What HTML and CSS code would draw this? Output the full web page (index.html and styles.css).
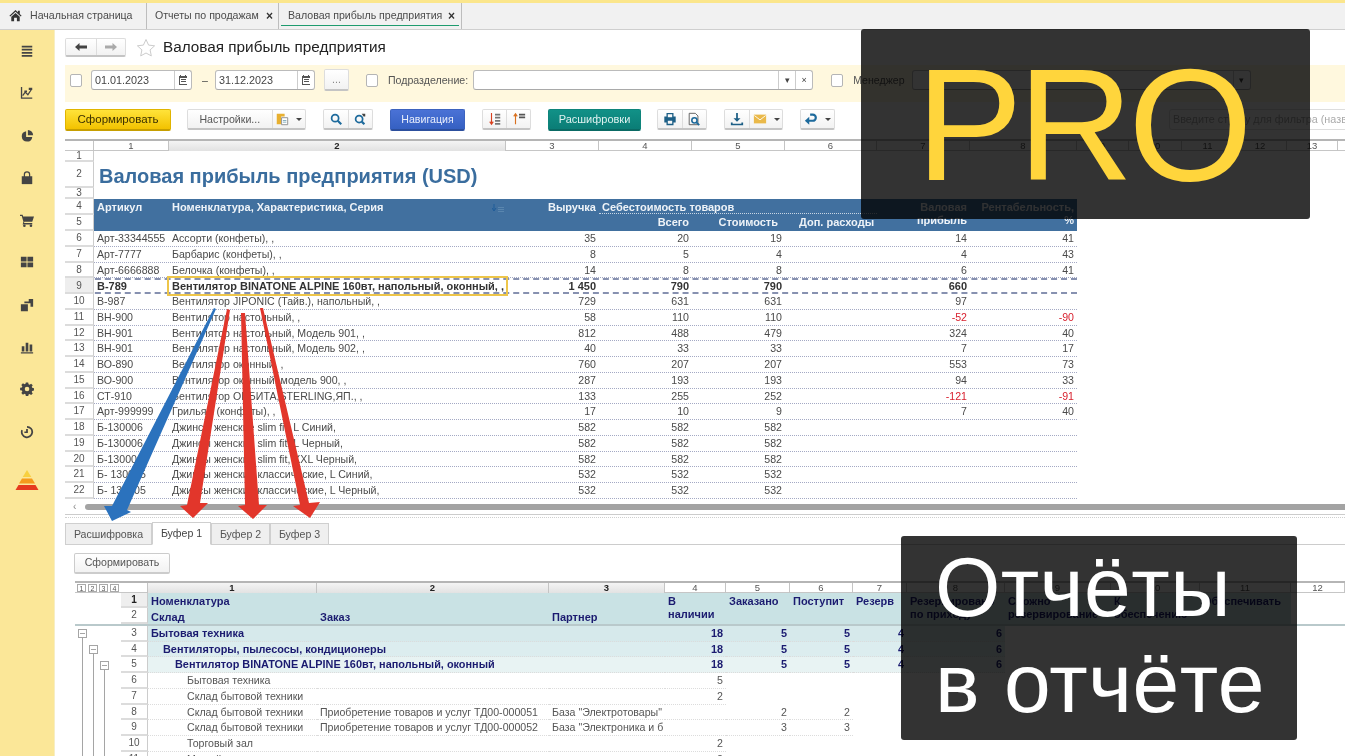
FILE: index.html
```html
<!DOCTYPE html>
<html lang="ru">
<head>
<meta charset="utf-8">
<title>Валовая прибыль предприятия</title>
<link rel="stylesheet" href="styles.css">
</head>
<body>
<div class="app">
  <div class="topline"></div>
  <nav class="tabs">
    <div class="tab tab-home"><svg class="ico-home" viewBox="0 0 16 16"><path d="M1.500 8.200 8 2l2.600 2.500V3h2v3.400l1.900 1.800-.9.9L8 4.100 2.400 9.100zM3.500 9.300 8 5.300l4.500 4V14H9.500v-3.500h-3V14H3.500z"/></svg><span>Начальная страница</span></div>
    <div class="tab tab-b"><span>Отчеты по продажам</span><b class="x">×</b></div>
    <div class="tab tab-c"><span>Валовая прибыль предприятия</span><b class="x">×</b></div>
  </nav>
  <div class="body">
    <aside class="side">
      <svg viewBox="0 0 16 16"><path d="M2 2h12v2H2zM2 5.500h12v2H2zM2 9h12v2H2zM2 12.500h12v2H2z"/></svg>
      <svg viewBox="0 0 16 16"><path d="M1 1h1.500v12H14v1.500H1z"/><path d="M3 11l3-4 3 3 4-6" fill="none" stroke="#444" stroke-width="1.500"/><path d="M5 5h3v2H5zM10 2h4v2.500h-4z"/></svg>
      <svg viewBox="0 0 16 16"><path d="M7 2.500A6 6 0 1 0 14 9H7z"/><path d="M9 1a6 6 0 0 1 6 6H9z"/></svg>
      <svg viewBox="0 0 16 16"><path d="M2 6h12v9H2z"/><path d="M5 7V4a3 3 0 0 1 6 0v3" fill="none" stroke="#444" stroke-width="1.400"/></svg>
      <svg viewBox="0 0 16 16"><path d="M0 2h3l.6 2H16l-2 6H5l-.4 1.500H14V13H3l.9-3L2 3.500H0z"/><circle cx="5" cy="14.500" r="1.500"/><circle cx="12.500" cy="14.500" r="1.500"/></svg>
      <svg viewBox="0 0 16 16"><path d="M1 2h6.500v5.500H1zM8.500 2H15v5.500H8.500zM1 8.500h6.500V14H1zM8.500 8.500H15V14H8.500z"/></svg>
      <svg viewBox="0 0 16 16"><path d="M1 7h8v8H1zM5 4h7v2H5zM10 1h5v9h-3V5h-2z"/></svg>
      <svg viewBox="0 0 16 16"><path d="M2 7h3v6H2zM6.500 3h3v10h-3zM11 5h3v8h-3zM1 14h14v1.500H1z"/></svg>
      <svg viewBox="0 0 16 16"><path fill-rule="evenodd" d="M6.500 0h3l.5 2.300 1.300.6 2-1.300 2.100 2.100-1.300 2 .6 1.300 2.300.5v3l-2.300.5-.6 1.300 1.300 2-2.100 2.100-2-1.300-1.300.6-.5 2.300h-3L6 15.200l-1.300-.6-2 1.300L.6 13.800l1.300-2-.6-1.300L-1 10V7l2.300-.5.6-1.300-1.300-2L2.700 1.100l2 1.300L6 1.800zM8 5.500a3 3 0 1 0 0 6 3 3 0 0 0 0-6z" transform="translate(1 .5) scale(.88)"/></svg>
      <svg viewBox="0 0 16 16"><path d="M8 1a7 7 0 1 1-6.500 4.400l1.800.8A5 5 0 1 0 8 3z"/><path d="M7 4.500h2V9H5V7.500h2z"/></svg>
      <svg class="pyramid" viewBox="0 0 24 20"><path fill="#f8d040" d="M12 0l4.300 7H7.700z"/><path fill="#f59a1c" d="M7 8.500h10l3 5H4z"/><path fill="#e63a1e" d="M3.500 15h17l3 5H.5z"/></svg>
    </aside>
    <main class="main">
      <header class="titlebar">
        <div class="btn nav"><span class="seg"><svg class="navi" viewBox="0 0 12 8"><path fill="#444" d="M0 4l4.500-4v2.500H12v3H4.500V8z"/></svg></span><span class="seg"><svg class="navi" viewBox="0 0 12 8"><path fill="#aaa" d="M12 4L7.500 0v2.500H0v3h7.500V8z"/></svg></span></div>
        <svg class="star" viewBox="0 0 20 20"><path d="M10 1.500l2.600 5.600 6 .7-4.500 4.100 1.200 6L10 15l-5.300 2.900 1.200-6L1.400 7.800l6-.7z"/></svg>
        <h1>Валовая прибыль предприятия</h1>
      </header>
      <section class="filter">
        <span class="check"></span>
        <div class="input date"><span class="val">01.01.2023</span><span class="pick"><svg class="cal" viewBox="0 0 10 10"><path d="M1 1h1V0h1v1h4V0h1v1h1v9H1zM2 3v6h7V3z"/><path d="M3 4h5v1H3zM3 6h5v1H3z"/></svg></span></div>
        <span class="dash">–</span>
        <div class="input date d2"><span class="val">31.12.2023</span><span class="pick"><svg class="cal" viewBox="0 0 10 10"><path d="M1 1h1V0h1v1h4V0h1v1h1v9H1zM2 3v6h7V3z"/><path d="M3 4h5v1H3zM3 6h5v1H3z"/></svg></span></div>
        <div class="btn dots">...</div>
        <span class="check c2"></span>
        <label class="lbl">Подразделение:</label>
        <div class="input wide"><span class="val"></span><span class="pick drop">▾</span><span class="pick drop">×</span></div>
        <span class="check c3"></span>
        <label class="lbl">Менеджер</label>
        <div class="input wide2"><span class="val"></span><span class="pick drop">▾</span></div>
      </section>
      <section class="toolbar">
        <div class="btn primary">Сформировать</div>
        <div class="btn group g1"><span class="seg txt">Настройки...</span><span class="seg ic2"><svg class="tool" viewBox="0 0 16 16"><path fill="#e8b030" d="M2 2h9v3H7v9H2z"/><path fill="#fff" stroke="#888" d="M7.500 6.500h7v8h-7z"/><path fill="#69a" d="M9 9h4v1H9zM9 11h4v1H9z"/></svg><i class="caret"></i></span></div>
        <div class="btn group g2"><span class="seg sq"><svg class="tool" viewBox="0 0 16 16"><circle cx="7" cy="7" r="4" fill="none" stroke="#1d6a9c" stroke-width="2"/><path d="M10 10l4 4" stroke="#1d6a9c" stroke-width="2.500"/></svg></span><span class="seg sq"><svg class="tool" viewBox="0 0 16 16"><circle cx="7" cy="8" r="4" fill="none" stroke="#1d6a9c" stroke-width="2"/><path d="M10 11l3 3" stroke="#1d6a9c" stroke-width="2.500"/><path d="M10 2h4v3h-2z" fill="#444"/></svg></span></div>
        <div class="btn blue">Навигация</div>
        <div class="btn group g3"><span class="seg sq"><svg class="tool" viewBox="0 0 16 16"><path d="M4 1v13M2 11l2 3 2-3" fill="none" stroke="#d9401e" stroke-width="1.300"/><path fill="#777" d="M8 2h6v2H8zM8 5.500h6v2H8zM8 9h6v2H8zM8 12.500h6v2H8z"/></svg></span><span class="seg sq"><svg class="tool" viewBox="0 0 16 16"><path d="M4 14V2M2 5l2-3 2 3" fill="none" stroke="#d9701e" stroke-width="1.300"/><path fill="#555" d="M8 2h7v2H8zM8 5h7v2H8z"/></svg></span></div>
        <div class="btn teal">Расшифровки</div>
        <div class="btn group g4"><span class="seg sq"><svg class="tool" viewBox="0 0 16 16"><path fill="#1d5f86" d="M4 1h8v4h2.500v7H12v3H4v-3H1.500V5H4zM5.500 2.500V6h5V2.500zM5.500 10v3.500h5V10z"/></svg></span><span class="seg sq"><svg class="tool" viewBox="0 0 16 16"><path fill="none" stroke="#555" d="M2.500 1.500h7l3 3v10h-10z"/><circle cx="8.500" cy="9.500" r="3" fill="none" stroke="#1d6a9c" stroke-width="1.800"/><path d="M10.500 11.500l3.500 3.500" stroke="#1d6a9c" stroke-width="2"/></svg></span></div>
        <div class="btn group g5"><span class="seg sq"><svg class="tool" viewBox="0 0 16 16"><path fill="#1d5f86" d="M7 1h2v6h3L8 11 4 7h3zM1 12h2v1.500h10V12h2v3H1z"/></svg></span><span class="seg ic2"><svg class="tool" viewBox="0 0 16 16"><path fill="#eab94a" d="M1 3h14v10H1z"/><path fill="none" stroke="#fff" d="M1.500 4 8 9l6.500-5"/></svg><i class="caret"></i></span></div>
        <div class="btn group g6"><span class="seg ic2"><svg class="tool" viewBox="0 0 16 16"><path fill="none" stroke="#1d6a9c" stroke-width="2.500" d="M7 3h3a3.500 3.500 0 0 1 0 7H4"/><path fill="#1d6a9c" d="M6 5.500 1 10l5 4.500z"/></svg><i class="caret"></i></span></div>
        <div class="input search"><span class="val ph">Введите строку для фильтра (назва</span></div>
      </section>

      <section class="sheet s1">
        <div class="colhead"><span></span><span>1</span><span class="sel">2</span><span>3</span><span>4</span><span>5</span><span>6</span><span>7</span><span>8</span><span>9</span><span>10</span><span>11</span><span>12</span><span>13</span></div>
        <div class="blank h11"><span class="num">1</span></div>
        <div class="blank h26"><span class="num">2</span><h2>Валовая прибыль предприятия (USD)</h2></div>
        <div class="blank h11"><span class="num">3</span></div>
        <div class="thead">
          <span class="num">4</span><span>Артикул</span><span class="sorted">Номенклатура, Характеристика, Серия<svg class="sort" viewBox="0 0 12 8"><path d="M2 0v6M0 4l2 3 2-3" fill="none" stroke="#1f5c99"/><path fill="#5a86ae" d="M6 3h6v1H6zM6 5h6v1H6zM6 7h6v1H6z"/></svg></span><span class="r">Выручка</span><span class="cost">Себестоимость товаров</span><span class="r two">Валовая<br>прибыль</span><span class="r two">Рентабельность,<br>%</span>
          <span class="num">5</span><span></span><span></span><span></span><span class="r low">Всего</span><span class="r low l-cost">Стоимость</span><span class="low l-extra">Доп. расходы</span>
        </div>
        <div class="row"><span class="num">6</span><span>Арт-33344555</span><span>Ассорти (конфеты), ,</span><span class="r">35</span><span class="r">20</span><span class="r">19</span><span></span><span class="r">14</span><span class="r">41</span></div>
        <div class="row"><span class="num">7</span><span>Арт-7777</span><span>Барбарис (конфеты), ,</span><span class="r">8</span><span class="r">5</span><span class="r">4</span><span></span><span class="r">4</span><span class="r">43</span></div>
        <div class="row"><span class="num">8</span><span>Арт-6666888</span><span>Белочка (конфеты), ,</span><span class="r">14</span><span class="r">8</span><span class="r">8</span><span></span><span class="r">6</span><span class="r">41</span></div>
        <div class="row current"><span class="num">9</span><span>В-789</span><span class="focus">Вентилятор BINATONE ALPINE 160вт, напольный, оконный, ,</span><span class="r">1 450</span><span class="r">790</span><span class="r">790</span><span></span><span class="r">660</span><span></span></div>
        <div class="row"><span class="num">10</span><span>В-987</span><span>Вентилятор JIPONIC (Тайв.), напольный, ,</span><span class="r">729</span><span class="r">631</span><span class="r">631</span><span></span><span class="r">97</span><span></span></div>
        <div class="row"><span class="num">11</span><span>ВН-900</span><span>Вентилятор настольный, ,</span><span class="r">58</span><span class="r">110</span><span class="r">110</span><span></span><span class="r neg">-52</span><span class="r neg">-90</span></div>
        <div class="row"><span class="num">12</span><span>ВН-901</span><span>Вентилятор настольный, Модель 901, ,</span><span class="r">812</span><span class="r">488</span><span class="r">479</span><span></span><span class="r">324</span><span class="r">40</span></div>
        <div class="row"><span class="num">13</span><span>ВН-901</span><span>Вентилятор настольный, Модель 902, ,</span><span class="r">40</span><span class="r">33</span><span class="r">33</span><span></span><span class="r">7</span><span class="r">17</span></div>
        <div class="row"><span class="num">14</span><span>ВО-890</span><span>Вентилятор оконный, ,</span><span class="r">760</span><span class="r">207</span><span class="r">207</span><span></span><span class="r">553</span><span class="r">73</span></div>
        <div class="row"><span class="num">15</span><span>ВО-900</span><span>Вентилятор оконный, модель 900, ,</span><span class="r">287</span><span class="r">193</span><span class="r">193</span><span></span><span class="r">94</span><span class="r">33</span></div>
        <div class="row"><span class="num">16</span><span>СТ-910</span><span>Вентилятор ORБИТА,STERLING,ЯП., ,</span><span class="r">133</span><span class="r">255</span><span class="r">252</span><span></span><span class="r neg">-121</span><span class="r neg">-91</span></div>
        <div class="row"><span class="num">17</span><span>Арт-999999</span><span>Грильяж (конфеты), ,</span><span class="r">17</span><span class="r">10</span><span class="r">9</span><span></span><span class="r">7</span><span class="r">40</span></div>
        <div class="row"><span class="num">18</span><span>Б-130006</span><span>Джинсы женские slim fit, L Синий,</span><span class="r">582</span><span class="r">582</span><span class="r">582</span></div>
        <div class="row"><span class="num">19</span><span>Б-130006</span><span>Джинсы женские slim fit, L Черный,</span><span class="r">582</span><span class="r">582</span><span class="r">582</span></div>
        <div class="row"><span class="num">20</span><span>Б-130006</span><span>Джинсы женские slim fit, XXL Черный,</span><span class="r">582</span><span class="r">582</span><span class="r">582</span></div>
        <div class="row"><span class="num">21</span><span>Б- 130005</span><span>Джинсы женские классические, L Синий,</span><span class="r">532</span><span class="r">532</span><span class="r">532</span></div>
        <div class="row"><span class="num">22</span><span>Б- 130005</span><span>Джинсы женские классические, L Черный,</span><span class="r">532</span><span class="r">532</span><span class="r">532</span></div>
        <div class="hscroll"><span class="arrow">‹</span><span class="thumb"></span></div>
      </section>
      <div class="splitter"></div>

      <div class="pages">
        <span class="page">Расшифровка</span><span class="page active">Буфер 1</span><span class="page">Буфер 2</span><span class="page">Буфер 3</span>
      </div>
      <div class="btn form2">Сформировать</div>

      <section class="sheet s2">
        <svg class="outline" viewBox="0 0 46 162"><g fill="none" stroke="#a5a5a5"><path d="M7.500 43V162M18.500 59V162M29.500 75V162"/><g fill="#fff"><rect x="3.500" y="35.500" width="8" height="8"/><rect x="14.500" y="51.500" width="8" height="8"/><rect x="25.500" y="67.500" width="8" height="8"/></g><path d="M5 39.500h5M16 55.500h5M27 71.500h5"/></g></svg>
        <div class="colhead c2h"><span class="levels"><i>1</i><i>2</i><i>3</i><i>4</i></span><span></span><span class="sel">1</span><span class="sel">2</span><span class="sel">3</span><span>4</span><span>5</span><span>6</span><span>7</span><span>8</span><span>9</span><span>10</span><span>11</span><span>12</span></div>
        <div class="thead2">
          <span class="gut"></span><span class="num nsel">1</span><span class="w3">Номенклатура</span><span class="two">В<br>наличии</span><span class="two">Заказано</span><span class="two">Поступит</span><span class="two">Резерв</span><span class="two">Резервировано<br>по приходу</span><span class="two">Сложно<br>резервирование</span><span class="two">К<br>обеспечению</span><span class="two">Обеспечивать</span><span class="gut two"></span>
          <span class="gut"></span><span class="num">2</span><span>Склад</span><span>Заказ</span><span>Партнер</span>
        </div>
        <div class="row2 g-a"><span class="gut"></span><span class="num">3</span><span class="w3">Бытовая техника</span><span class="r">18</span><span class="r">5</span><span class="r">5</span><span class="r">4</span><span class="r">6</span></div>
        <div class="row2 g-b"><span class="gut"></span><span class="num">4</span><span class="w3 i1">Вентиляторы, пылесосы, кондиционеры</span><span class="r">18</span><span class="r">5</span><span class="r">5</span><span class="r">4</span><span class="r">6</span></div>
        <div class="row2 g-c"><span class="gut"></span><span class="num">5</span><span class="w3 i2">Вентилятор BINATONE ALPINE 160вт, напольный, оконный</span><span class="r">18</span><span class="r">5</span><span class="r">5</span><span class="r">4</span><span class="r">6</span></div>
        <div class="row2"><span class="gut"></span><span class="num">6</span><span class="i3">Бытовая техника</span><span></span><span></span><span class="r">5</span></div>
        <div class="row2"><span class="gut"></span><span class="num">7</span><span class="i3">Склад бытовой техники</span><span></span><span></span><span class="r">2</span></div>
        <div class="row2"><span class="gut"></span><span class="num">8</span><span class="i3">Склад бытовой техники</span><span>Приобретение товаров и услуг ТД00-000051</span><span>База "Электротовары"</span><span></span><span class="r">2</span><span class="r">2</span></div>
        <div class="row2"><span class="gut"></span><span class="num">9</span><span class="i3">Склад бытовой техники</span><span>Приобретение товаров и услуг ТД00-000052</span><span>База "Электроника и б</span><span></span><span class="r">3</span><span class="r">3</span></div>
        <div class="row2"><span class="gut"></span><span class="num">10</span><span class="i3">Торговый зал</span><span></span><span></span><span class="r">2</span></div>
        <div class="row2"><span class="gut"></span><span class="num">11</span><span class="i3">Малый склад</span><span></span><span></span><span class="r">2</span></div>
      </section>
    </main>
  </div>

  <svg class="arrows" viewBox="0 0 1345 756">
    <polygon class="blue-a" points="214,308 216,309 127,510 131,512 112,521 104,506 112,506"/>
    <polygon class="red-a" points="227,309 230,310 200,503 208,503 193,518 180,506 187,505"/>
    <polygon class="red-a" points="241,313 245,313 259,505 267,505 253,519 238,506 245,505"/>
    <polygon class="red-a" points="260,308 263,308 309,503 320,502 310,518 293,506 300,505"/>
  </svg>
  <div class="panel pro"><span>PRO</span></div>
  <div class="panel rep"><span>Отчёты<br>в отчёте</span></div>
</div>
</body>
</html>
```
FILE: styles.css
```css
* { box-sizing: border-box; }
html, body { margin: 0; height: 100%; background: #fff; }
body { font: 10.600px/1.2 "Liberation Sans", Arial, sans-serif; color: #484848; overflow: hidden; }
.app { position: relative; width: 1345px; height: 756px; display: flex; flex-direction: column; overflow: hidden; }
.topline { height: 3px; background: #fbe68c; flex: none; }

.tabs { flex: none; height: 27px; display: flex; align-items: stretch; background: #f1f1f1; border-bottom: 1px solid #cfcfcf; color: #4b4b4b; }
.tab { display: flex; align-items: center; border-right: 1px solid #bdbdbd; padding-bottom: 1px; }
.tab-home { width: 147px; padding-left: 8px; gap: 7px; }
.ico-home { width: 15px; height: 15px; fill: #333; }
.tab-b { width: 132px; padding-left: 8px; justify-content: space-between; padding-right: 5px; }
.tab-c { width: 183px; padding-left: 9px; padding-right: 6px; justify-content: space-between; background: linear-gradient(#1e9b6e, #1e9b6e) no-repeat 2px 22px / 178px 1px; }
.x { font-size: 12px; line-height: 10px; color: #333; }

.body { flex: 1; display: flex; min-height: 0; }
.side { flex: none; width: 55px; background: #fbe798; border-right: 1px solid #f7eec4; display: flex; flex-direction: column; align-items: center; padding-top: 14px; gap: 28.300px; }
.side svg { width: 14px; height: 14px; fill: #444; flex: none; }
.side .pyramid { width: 24px; height: 20px; margin-top: 3px; }

.main { flex: 1; min-width: 0; padding-left: 10px; overflow: hidden; }
.titlebar { height: 35px; display: flex; align-items: center; }
.titlebar h1 { margin: 0 0 0 7px; font-size: 15.300px; font-weight: 400; color: #222; }
.star { width: 20px; height: 20px; margin-left: 10px; fill: #fff; stroke: #ccc; }

.btn { display: flex; align-items: center; justify-content: center; height: 21px; border: 1px solid #ddd; border-bottom: 2px solid #c4c4c4; border-radius: 2px; background: linear-gradient(#fff, #f2f2f2); flex: none; }
.nav { width: 61px; height: 19px; margin-top: -1px; }
.seg { height: 100%; display: flex; align-items: center; justify-content: center; }
.nav .seg { width: 50%; }
.nav .seg + .seg { border-left: 1px solid #ddd; }
.navi { width: 12px; height: 8px; }

.filter { height: 37px; background: #fff8de; display: flex; align-items: center; padding: 0 0 7px 5px; }
.check { width: 12px; height: 13px; border: 1px solid #b5b5b5; border-radius: 2px; background: #fff; flex: none; }
.input { display: flex; height: 20px; background: #fff; border: 1px solid #bbb; border-bottom-color: #a9a9a9; border-radius: 3px; flex: none; }
.val { flex: 1; padding: 3px 3px; color: #444; white-space: nowrap; overflow: hidden; font-size: 10.800px; }
.pick { width: 17px; border-left: 1px solid #ccc; display: flex; align-items: center; justify-content: center; font-size: 9px; color: #444; }
.date { width: 101px; margin-left: 9px; }
.d2 { width: 100px; }
.cal { width: 10px; height: 10px; fill: #555; }
.dash { width: 23px; padding-left: 10px; margin-right: -9px; }
.dots { width: 25px; height: 22px; margin-left: 9px; color: #888; }
.c2 { margin-left: 17px; }
.lbl { margin-left: 10px; color: #555; white-space: nowrap; }
.wide { width: 340px; margin-left: 5px; }
.c3 { margin-left: 18px; }
.wide2 { width: 339px; margin-left: 7px; }

.toolbar { display: flex; margin-top: 7px; height: 22px; align-items: flex-start; }
.primary { width: 106px; height: 22px; font-size: 11.500px; background: linear-gradient(#ffe33a, #f3c200); border-color: #e0b400; border-bottom-color: #c79f00; color: #3a2f00; }
.group .seg + .seg { border-left: 1px solid #ddd; }
.sq { width: 25px; }
.tool { width: 14px; height: 14px; }
.caret { width: 0; height: 0; border: 3px solid transparent; border-top: 3px solid #444; border-bottom: 0; margin-left: 7px; }
.g1 { width: 119px; margin-left: 16px; }
.g1 .txt { width: 85px; color: #555; }
.g1 .ic2 { width: 34px; }
.g2 { width: 50px; margin-left: 17px; }
.blue { width: 75px; height: 22px; margin-left: 17px; color: #e8eefc; background: linear-gradient(#4a72d6, #3560c2); border-color: #3c63bf; border-bottom-color: #2c4f9d; }
.g3 { width: 49px; margin-left: 17px; }
.teal { width: 93px; height: 22px; margin-left: 17px; font-size: 11px; color: #dff2f0; background: linear-gradient(#119187, #0b7d76); border-color: #0e847b; border-bottom-color: #0a6a64; }
.g4 { width: 50px; margin-left: 16px; }
.g5 { width: 59px; margin-left: 17px; }
.g5 .ic2 { width: 34px; }
.g6 { width: 35px; margin-left: 17px; }
.search { width: 200px; height: 21px; margin-left: 334px; border-color: #ddd; }
.ph { color: #aaa; }

.sheet { position: relative; }
.s1 { margin-top: 8px; --cols: 29px 75px 337px 93px 93px 93px 92px 93px 107px; }
.colhead { display: grid; height: 12px; border-top: 2px solid #b5b5b5; border-bottom: 1px solid #c6c6c6; text-align: center; font-size: 9.500px; line-height: 10px; color: #555; grid-template-columns: 29px 75px 337px 93px 93px 93px 92px 93px 107px 52px 53px 52px 53px 51px; }
.colhead span { border-right: 1px solid #c4c4c4; }
.colhead .sel { background: linear-gradient(#f4f4f4, #e2e2e2); color: #222; font-weight: 700; }
.num { display: block; background: #fff; text-align: center; border-right: 1px solid #ccc; border-bottom: 2px solid #dcdcdc; color: #555; font-size: 10px; }
.blank { display: flex; width: 29px; }
.blank .num { width: 29px; flex: none; line-height: 10px; }
.h11 { height: 11px; }
.h26 { height: 26px; }
.h26 .num { line-height: 24px; }
.h26 h2 { margin: 0; padding: 1px 0 0 5px; flex: none; font-size: 20px; line-height: 26px; color: #3a6d9e; font-weight: 700; white-space: nowrap; }
.thead { display: grid; grid-template-columns: var(--cols); grid-template-rows: 16px 16px; width: 1012px; background: #41709f; color: #eef3f8; font-weight: 700; font-size: 11px; line-height: 13px; }
.thead > span { padding: 2px 3px 0; white-space: nowrap; }
.thead .num { font-weight: 400; font-size: 10px; line-height: 14px; padding: 0; color: #555; }
.sorted { position: relative; }
.sort { position: absolute; right: 2px; top: 5px; width: 12px; height: 8px; }
.cost { grid-column: span 3; border-bottom: 1px dotted #c8d6e4; height: 15px; }
.two { grid-row: span 2; line-height: 13px; }
.low { padding-top: 1px !important; }
.l-cost { padding-right: 7px !important; }
.l-extra { padding-left: 14px !important; }
.r { text-align: right; }

.row { display: grid; grid-template-columns: var(--cols); width: 1012px; height: 15.750px; border-bottom: 1px dotted #a4a9c4; line-height: 14px; color: #4a4a4a; }
.row > span { padding: 0 3px; white-space: nowrap; overflow: hidden; }
.row > .num { padding: 0; margin-bottom: -1px; font-size: 10px; }
.neg { color: #d81e2c; }
.current { border-top: 2px dashed #8791b0; border-bottom: 2px dashed #8791b0; font-weight: 700; font-size: 11px; line-height: 12px; color: #333; }
.row.current > .num { margin-top: -2px; margin-bottom: -2px; background: #eee; font-weight: 400; line-height: 15px; }
.row > .focus { margin: 0 2px; padding: 0 1px; outline: 2px solid #eec64a; outline-offset: 2px; overflow: visible; }
.hscroll { display: flex; align-items: center; height: 14px; border-bottom: 1px solid #ccc; margin-top: 2px; color: #888; padding-left: 8px; }
.arrow { width: 12px; font-size: 10px; }
.thumb { flex: 1; height: 6px; border-radius: 3px 0 0 3px; background: #a3a3a3; }
.splitter { height: 3px; border-bottom: 1px dotted #cfcfcf; }

.pages { display: flex; height: 23px; margin-top: 4px; border-bottom: 1px solid #ccc; align-items: flex-end; }
.page { width: 59px; height: 22px; margin-bottom: -1px; background: #efefef; border: 1px solid #cfcfcf; text-align: center; line-height: 21px; color: #555; }
.page:first-child { width: 87px; }
.page.active { background: #fff; border-bottom-color: #fff; height: 23px; color: #444; }
.form2 { width: 96px; margin: 8px 0 0 9px; height: 21px; color: #555; border-color: #ccc; }

.s2 { margin: 7px 0 0 10px; --c2: 46px 27px 169px 232px 116px 61px 64px 63px 54px 98px 106px 89px 91px 54px; }
.outline { position: absolute; left: 0; top: 13px; width: 46px; height: 162px; z-index: 1; }
.c2h { grid-template-columns: var(--c2); }
.c2h > span { border-right: 1px solid #c4c4c4; }
.levels { display: flex; gap: 2px; padding: 1px 0 0 2px; border: 0 !important; }
.levels i { width: 9px; height: 8px; border: 1px solid #aaa; font-style: normal; font-size: 7px; line-height: 7px; }
.thead2 { display: grid; grid-template-columns: var(--c2); grid-template-rows: 15.500px 15.500px; color: #1b1b70; font-weight: 700; font-size: 11px; line-height: 13px; border-bottom: 2px solid #b9c9cb; width: 1270px; }
.thead2 > span { background: #c9e2e4; padding: 2px 3px 0; white-space: nowrap; }
.thead2 > .gut { background: #fff; padding: 0; }
.thead2 > .num { padding: 0; background: #fff; font-weight: 400; font-size: 10px; line-height: 14px; }
.thead2 > .nsel { background: #eee; color: #222; font-weight: 700; }
.w3 { grid-column: span 3; }
.thead2 > span:nth-child(n+15) { padding-top: 3px; }
.row2 { display: grid; grid-template-columns: var(--c2); height: 15.750px; line-height: 14px; color: #555; }
.row2 > span { padding: 0 3px; white-space: nowrap; overflow: hidden; border-bottom: 1px dotted #dcdcdc; }
.row2 > .gut { padding: 0; border: 0; }
.row2 > .num { padding: 0; border-bottom: 2px solid #dcdcdc; font-size: 10px; }
.g-a > span:not(.gut, .num) { background: #d6e9eb; }
.g-b > span:not(.gut, .num) { background: #dcedef; }
.g-c > span:not(.gut, .num) { background: #e8f3f3; }
.g-a, .g-b, .g-c { color: #1b1b70; font-weight: 700; font-size: 10.900px; }
.g-a .num, .g-b .num, .g-c .num { font-weight: 400; color: #555; }
.i1 { padding-left: 15px !important; }
.i2 { padding-left: 27px !important; }
.i3 { padding-left: 39px !important; }

.arrows { position: absolute; left: 0; top: 0; width: 1345px; height: 756px; pointer-events: none; }
.blue-a { fill: #2b72bd; }
.red-a { fill: #e2362b; }

.panel { position: absolute; display: flex; }
.panel::before { content: ""; position: absolute; inset: 0; background: #333; border-radius: 3px; mix-blend-mode: multiply; }
.panel span { position: relative; white-space: nowrap; }
.pro { left: 861px; top: 29px; width: 449px; height: 190px; color: #ffd53c; font-size: 160px; letter-spacing: -5px; line-height: 192px; padding-left: 55px; }
.rep { left: 901px; top: 536px; width: 396px; height: 204px; color: #fff; font-size: 84px; letter-spacing: .5px; line-height: 96px; padding: 3px 0 0 34px; }
```
